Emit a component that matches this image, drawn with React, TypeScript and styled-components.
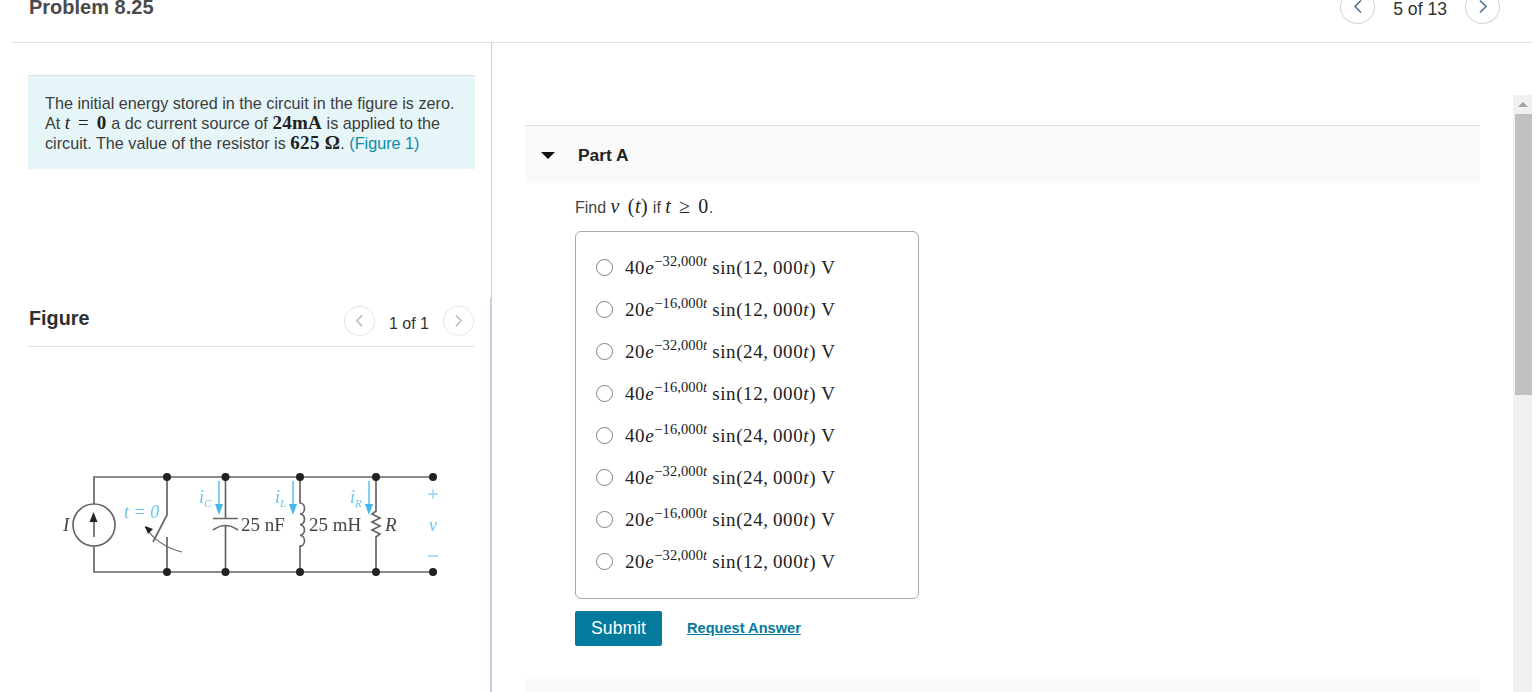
import { createGlobalStyle, styled } from 'styled-components'

const OPTIONS = [
  ['40', '32,000', '12,000'],
  ['20', '16,000', '12,000'],
  ['20', '32,000', '24,000'],
  ['40', '16,000', '12,000'],
  ['40', '16,000', '24,000'],
  ['40', '32,000', '24,000'],
  ['20', '16,000', '24,000'],
  ['20', '32,000', '12,000'],
]

const GlobalStyle = createGlobalStyle`
  html, body {
    margin: 0;
    padding: 0;
    background: #fff;
    overflow: hidden;
  }
  body {
    font-family: "Liberation Sans", Arial, sans-serif;
    color: #333;
  }
`

const Page = styled.div`
  width: 1538px;
  height: 692px;
  overflow: hidden;
  background: #fff;
`

const Header = styled.header`
  box-sizing: border-box;
  height: 43px;
  margin: 0 6px 0 12px;
  padding: 0 32px 29px 17px;
  border-bottom: 1px solid #dcdfe2;
  display: flex;
  align-items: center;
  justify-content: space-between;
`

const Title = styled.h1`
  margin: 0;
  font-size: 20px;
  line-height: 20px;
  font-weight: 700;
  color: #4a4a4a;
`

const Pager = styled.div<{ $gap: number; $size: number }>`
  display: flex;
  align-items: center;
  gap: ${(p) => p.$gap}px;
  font-size: ${(p) => p.$size}px;
  color: #333;
`

const PagerLabel = styled.span<{ $drop: number }>`
  margin-top: ${(p) => p.$drop}px;
`

const NavButton = styled.button<{ $size: number; $faded?: boolean }>`
  box-sizing: border-box;
  width: ${(p) => p.$size + 1}px;
  height: ${(p) => p.$size}px;
  padding: 0;
  border-radius: 50%;
  border: 1px solid ${(p) => (p.$faded ? '#e6e6e6' : '#d4d4d4')};
  background: #fff;
  display: flex;
  align-items: center;
  justify-content: center;
  color: ${(p) => (p.$faded ? '#b5bcc4' : '#4f7396')};
`

const Columns = styled.div`
  display: flex;
  width: 1532px;
  height: 649px;
`

const LeftColumn = styled.div`
  width: 492px;
  flex: none;
  display: flex;
  flex-direction: column;
`

const ProblemPane = styled.section`
  box-sizing: border-box;
  height: 255px;
  padding: 32px 16px 0 28px;
  border-right: 1px solid #c9ccd0;
`

const InfoBox = styled.div`
  box-sizing: border-box;
  height: 94px;
  padding: 17px 0 0 17px;
  background: #e6f5f7;
  border-top: 1px solid #d9dfe2;
  font-size: 16.2px;
  line-height: 20px;
  color: #3d3d3d;
  white-space: nowrap;
`

const FigureLink = styled.a`
  color: #0f8aa8;
`

const FigurePane = styled.section`
  flex: 1;
  box-sizing: border-box;
  padding: 0 16px 0 28px;
  border-right: 2px solid #c3d2e2;
`

const FigureHeader = styled.div`
  box-sizing: border-box;
  height: 49px;
  padding-top: 8px;
  border-bottom: 1px solid #dcdfe2;
  display: flex;
  align-items: flex-start;
  justify-content: space-between;
`

const FigureTitle = styled.h2`
  margin: 1px 0 0 1px;
  font-size: 19.8px;
  line-height: 23px;
  font-weight: 700;
  color: #2f2f2f;
`

const Diagram = styled.svg`
  display: block;
  margin: 103px 0 0 12px;
  filter: blur(0.45px);
`

const RightColumn = styled.div`
  flex: 1;
  display: flex;
  min-width: 0;
`

const Main = styled.main`
  flex: 1;
  min-width: 0;
  padding: 82px 33px 0;
`

const PartHeader = styled.div`
  box-sizing: border-box;
  height: 58px;
  padding: 2px 0 0 16px;
  background: #f9f9f9;
  border-top: 1px solid #dcdfe2;
  display: flex;
  align-items: center;
  gap: 23px;
  font-size: 17.4px;
  font-weight: 700;
  color: #222;
`

const Caret = styled.span`
  width: 0;
  height: 0;
  border-left: 7px solid transparent;
  border-right: 7px solid transparent;
  border-top: 7px solid #111;
`

const PartBody = styled.div`
  padding-left: 50px;
`

const Prompt = styled.p`
  margin: 0;
  height: 48px;
  padding-top: 13px;
  box-sizing: border-box;
  font-size: 16px;
  line-height: 20px;
  color: #444;
`

const OptionBox = styled.div`
  box-sizing: border-box;
  width: 344px;
  height: 368px;
  padding: 15px 0 0 20px;
  border: 1px solid #a9a9a9;
  border-radius: 6px;
`

const Option = styled.label`
  height: 42px;
  display: flex;
  align-items: center;
  gap: 12px;
`

const Radio = styled.span`
  box-sizing: border-box;
  width: 17px;
  height: 17px;
  margin-top: -1px;
  border-radius: 50%;
  border: 1.5px solid #808080;
  background: #fff;
`

const Math = styled.span<{ $bold?: boolean }>`
  font-family: "Liberation Serif", "Times New Roman", serif;
  font-size: 19px;
  line-height: 1;
  letter-spacing: ${(p) => (p.$bold ? 0.3 : 0.6)}px;
  font-weight: ${(p) => (p.$bold ? 700 : 400)};
  color: #222;
  white-space: nowrap;
`

const Equation = styled(Math)`
  word-spacing: 2px;
`

const PromptMath = styled(Equation)`
  font-size: 20px;
`

const OptionMath = styled(Math)`
  margin-top: -2px;
`

const Var = styled.i`
  font-style: italic;
`

const Exponent = styled.sup`
  font-size: 14.5px;
  line-height: 0;
  letter-spacing: 0.1px;
  vertical-align: 8px;
  margin: 0 5px 0 0;
`

const Actions = styled.div`
  margin-top: 12px;
  display: flex;
  align-items: center;
  gap: 25px;
`

const Submit = styled.button`
  width: 87px;
  height: 35px;
  padding: 0;
  border: 0;
  border-radius: 2px;
  background: #047a9c;
  color: #fff;
  font-family: inherit;
  font-size: 17.6px;
`

const RequestLink = styled.a`
  margin-bottom: 2px;
  font-size: 14.6px;
  font-weight: 700;
  color: #077a9c;
  text-decoration: underline;
`

const NextPart = styled.div`
  margin-top: 33px;
  height: 60px;
  background: #f9f9f9;
`

const Scrollbar = styled.div`
  width: 19px;
  flex: none;
  margin-top: 52px;
  background: #f1f1f1;
  display: flex;
  flex-direction: column;
  align-items: flex-end;
`

const ScrollArrow = styled.span`
  width: 0;
  height: 0;
  margin: 7px 4px 7px 0;
  border-left: 5px solid transparent;
  border-right: 5px solid transparent;
  border-bottom: 5px solid #a3a3a3;
`

const ScrollThumb = styled.div`
  width: 17px;
  height: 281px;
  background: #c1c1c1;
`

function Chevron({ dir, size }: { dir: 'left' | 'right'; size: number }) {
  return (
    <svg width={size} height={size * 1.5} viewBox="0 0 10 15" fill="none">
      <polyline
        points={dir === 'left' ? '8,1.5 2,7.5 8,13.5' : '2,1.5 8,7.5 2,13.5'}
        stroke="currentColor"
        strokeWidth="1.6"
      />
    </svg>
  )
}

function Circuit() {
  const ink = '#666'
  const cyan = '#45b8e8'
  const nodes = [167, 225.5, 300, 376, 433]
  return (
    <Diagram width="420" height="140" viewBox="40 450 420 140" fill="none">
      <g stroke={ink} strokeWidth="1.7">
        <path d="M433 477H94V504M94 546V572H433" />
        <circle cx="94" cy="525" r="21" />
        <path d="M94 537V519" />
        <path d="M167 477V515L153 542M167 537V572" />
        <path d="M145 527Q158 546 182 552" strokeWidth="1.2" />
        <path d="M225.5 477V518M213 518.5H238M213 530Q225.5 521 238 530M225.5 526V572" />
        <path d="M300 477V503a4.5 5.4 0 0 1 0 10.8a4.5 5.4 0 0 1 0 10.8a4.5 5.4 0 0 1 0 10.8a4.5 5.4 0 0 1 0 10.8V572" />
        <path d="M376 477V511L372 514L380 518L372 522L380 526L372 530L380 534L376 537V572" />
      </g>
      <path d="M93.5 512L89.5 522H97.5Z" fill="#222" />
      <path d="M145 526L153 529L148 534Z" fill="#222" />
      {nodes.map((x) => (
        <g key={x} fill="#222">
          <circle cx={x} cy="477" r="4" />
          <circle cx={x} cy="572" r="4" />
        </g>
      ))}
      <g stroke={cyan} strokeWidth="1.3">
        <path d="M219 481V506M293 481V506M369 481V506" />
        <path d="M433 489V499M428 494H438M428 556H438" opacity="0.6" />
      </g>
      <g fill={cyan}>
        <path d="M215 504H223L219 515Z" />
        <path d="M289 504H297L293 515Z" />
        <path d="M365 504H373L369 515Z" />
      </g>
      <g fontFamily="Liberation Serif, serif" fontSize="18" fill={cyan} fontStyle="italic" opacity="0.8">
        <text x="124" y="518">t = 0</text>
        <text x="199" y="503">i</text>
        <text x="204" y="507" fontSize="11">C</text>
        <text x="275" y="503">i</text>
        <text x="280" y="507" fontSize="11">L</text>
        <text x="350" y="503">i</text>
        <text x="355" y="507" fontSize="11">R</text>
        <text x="429" y="531">v</text>
      </g>
      <g fontFamily="Liberation Serif, serif" fontSize="19" fill="#444">
        <text x="241" y="531">25 nF</text>
        <text x="309" y="531">25 mH</text>
        <text x="385" y="531" fontStyle="italic">R</text>
        <text x="63" y="531" fontStyle="italic">I</text>
      </g>
    </Diagram>
  )
}

export default function App() {
  return (
    <Page>
      <GlobalStyle />
      <Header>
        <Title>Problem 8.25</Title>
        <Pager $gap={18} $size={17.6}>
          <NavButton $size={34}>
            <Chevron dir="left" size={10} />
          </NavButton>
          <PagerLabel $drop={6}>5 of 13</PagerLabel>
          <NavButton $size={34}>
            <Chevron dir="right" size={10} />
          </NavButton>
        </Pager>
      </Header>
      <Columns>
        <LeftColumn>
          <ProblemPane>
            <InfoBox>
              The initial energy stored in the circuit in the figure is zero.
              <br />
              At <Equation><Var>t</Var> = <b>0</b></Equation> a dc current source of{' '}
              <Math $bold>24mA</Math> is applied to the
              <br />
              circuit. The value of the resistor is <Math $bold>625 Ω</Math>.{' '}
              <FigureLink>(Figure 1)</FigureLink>
            </InfoBox>
          </ProblemPane>
          <FigurePane>
            <FigureHeader>
              <FigureTitle>Figure</FigureTitle>
              <Pager $gap={14} $size={16}>
                <NavButton $size={30} $faded>
                  <Chevron dir="left" size={9} />
                </NavButton>
                <PagerLabel $drop={5}>1 of 1</PagerLabel>
                <NavButton $size={30} $faded>
                  <Chevron dir="right" size={9} />
                </NavButton>
              </Pager>
            </FigureHeader>
            <Circuit />
          </FigurePane>
        </LeftColumn>
        <RightColumn>
          <Main>
            <PartHeader>
              <Caret />
              Part A
            </PartHeader>
            <PartBody>
              <Prompt>
                Find <PromptMath><Var>v</Var> (<Var>t</Var>)</PromptMath> if{' '}
                <PromptMath><Var>t</Var> ≥ 0</PromptMath>.
              </Prompt>
              <OptionBox>
                {OPTIONS.map(([amp, rate, freq], i) => (
                  <Option key={i}>
                    <Radio />
                    <OptionMath>
                      {amp}
                      <Var>e</Var>
                      <Exponent>
                        −{rate}
                        <Var>t</Var>
                      </Exponent>
                      sin({freq.replace(',', ',\u2009')}
                      <Var>t</Var>) V
                    </OptionMath>
                  </Option>
                ))}
              </OptionBox>
              <Actions>
                <Submit>Submit</Submit>
                <RequestLink>Request Answer</RequestLink>
              </Actions>
            </PartBody>
            <NextPart />
          </Main>
          <Scrollbar>
            <ScrollArrow />
            <ScrollThumb />
          </Scrollbar>
        </RightColumn>
      </Columns>
    </Page>
  )
}
